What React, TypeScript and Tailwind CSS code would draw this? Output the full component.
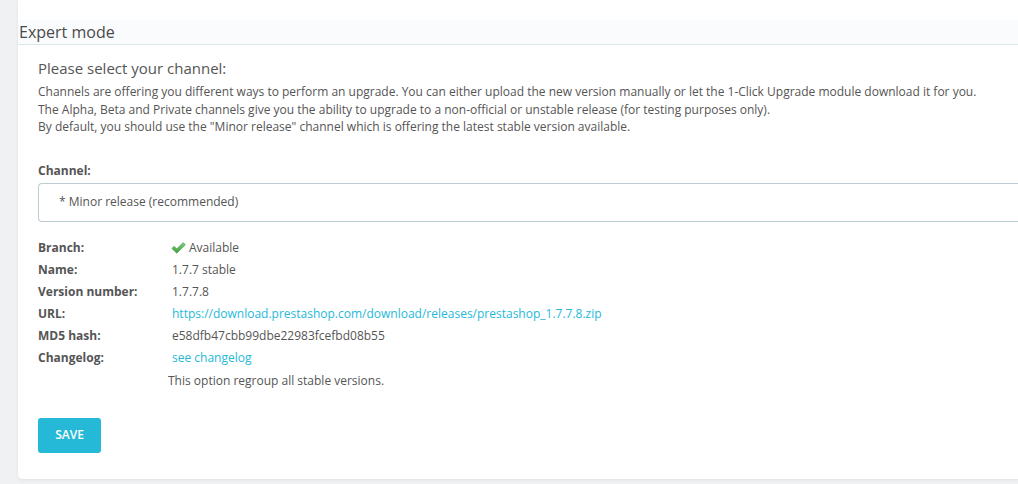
import React from "react";

const rows: { label: string; value: React.ReactNode }[] = [
  {
    label: "Branch:",
    value: (
      <span className="flex items-center gap-[3px]">
        <svg width="15" height="12" viewBox="0 0 15 12" className="-ml-[1px]">
          <defs>
            <linearGradient id="chk" x1="0" y1="0" x2="0" y2="1">
              <stop offset="0" stopColor="#7fcf7f" />
              <stop offset="1" stopColor="#3e9e3e" />
            </linearGradient>
          </defs>
          <path d="M0.8 6.4 L3.1 4.2 L5.8 6.8 L12.2 0.6 L14.4 2.8 L5.8 11.2 Z" fill="url(#chk)" stroke="#3d8f3d" strokeWidth="0.5" strokeLinejoin="round" />
        </svg>
        Available
      </span>
    ),
  },
  { label: "Name:", value: "1.7.7 stable" },
  { label: "Version number:", value: "1.7.7.8" },
  {
    label: "URL:",
    value: <span className="text-[#25b9d7]">https://download.prestashop.com/download/releases/prestashop_1.7.7.8.zip</span>,
  },
  { label: "MD5 hash:", value: "e58dfb47cbb99dbe22983fcefbd08b55" },
  { label: "Changelog:", value: <span className="text-[#25b9d7]">see changelog</span> },
];

export default function App() {
  return (
    <div
      className="h-[484px] w-full overflow-hidden bg-[#eff1f2] pl-[18px]"
      style={{ fontFamily: '"Open Sans", "Noto Sans", sans-serif' }}
    >
      <div className="h-[480px] rounded-bl-[5px] border-b border-[#e3e8ea] bg-white pt-[20px] shadow-[0_0_4px_0_rgba(0,0,0,0.06)]">
        <div className="h-[25px] border-b border-[#dbe6e9] bg-[#fafbfc] pl-[1px] text-[16px] leading-[24px] text-[#4a4a4a]">
          Expert mode
        </div>
        <div className="pl-[20px] text-[12px] text-[#555]">
          <div className="mt-[13px] text-[15px] leading-[20px] text-[#555]">Please select your channel:</div>
          <div className="mt-[5px] leading-[17.5px]">
            <div>
              Channels are offering you different ways to perform an upgrade. You can either upload the new version manually or let the 1-Click Upgrade module download it for you.
            </div>
            <div>
              The Alpha, Beta and Private channels give you the ability to upgrade to a non-official or unstable release (for testing purposes only).
            </div>
            <div>By default, you should use the "Minor release" channel which is offering the latest stable version available.</div>
          </div>
          <div className="mt-[26px] font-bold leading-[17px]">Channel:</div>
          <div className="mt-[4px] flex h-[39px] items-center rounded-l-[4px] border border-r-0 border-[#bbcdd2] pl-[20px] text-[#555]">
            * Minor release (recommended)
          </div>
          <div className="mt-[15px]">
            {rows.map((r) => (
              <div key={r.label} className="flex h-[22px] items-center">
                <div className="w-[134px] font-bold">{r.label}</div>
                <div>{r.value}</div>
              </div>
            ))}
          </div>
          <div className="mt-[3px] pl-[130px] leading-[17px]">This option regroup all stable versions.</div>
          <button className="mt-[29px] flex h-[35px] w-[63px] items-center justify-center rounded-[3px] bg-[#25b9d7] text-[12px] font-semibold text-white">
            SAVE
          </button>
        </div>
      </div>
    </div>
  );
}
